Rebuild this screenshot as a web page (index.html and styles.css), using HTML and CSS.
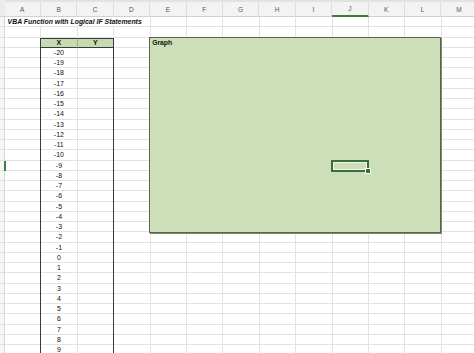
FILE: index.html
```html
<!DOCTYPE html>
<html lang="en">
<head>
  <title>VBA Function with Logical IF Statements</title>
  <meta charset="UTF-8">
  <link rel="stylesheet" href="styles.css">
</head>
<body>
  <div class="sheet">
    <!-- column headers -->
    <div class="corner"></div>
    <div class="colhead">A</div>
    <div class="colhead">B</div>
    <div class="colhead">C</div>
    <div class="colhead">D</div>
    <div class="colhead">E</div>
    <div class="colhead">F</div>
    <div class="colhead">G</div>
    <div class="colhead">H</div>
    <div class="colhead">I</div>
    <div class="colhead active">J</div>
    <div class="colhead">K</div>
    <div class="colhead">L</div>
    <div class="colhead">M</div>

    <!-- grid background -->
    <div class="rowheads"></div>
    <div class="cells"></div>

    <div class="title">VBA Function with Logical IF Statements</div>

    <div class="xy-table">
      <div class="xy-head">X</div>
      <div class="xy-head">Y</div>
      <div class="xs">
        <div>-20</div><div>-19</div><div>-18</div><div>-17</div><div>-16</div>
        <div>-15</div><div>-14</div><div>-13</div><div>-12</div><div>-11</div>
        <div>-10</div><div>-9</div><div>-8</div><div>-7</div><div>-6</div>
        <div>-5</div><div>-4</div><div>-3</div><div>-2</div><div>-1</div>
        <div>0</div><div>1</div><div>2</div><div>3</div><div>4</div>
        <div>5</div><div>6</div><div>7</div><div>8</div><div>9</div>
      </div>
    </div>

    <div class="graph">Graph</div>

    <div class="active-cell"><span class="handle"></span></div>
    <div class="row-mark"></div>
  </div>
</body>
</html>
```

FILE: styles.css
```css
body {
  margin: 0;
  background: #fff;
  font-family: 'Liberation Sans', Arial, sans-serif;
  overflow: hidden;
}
.sheet {
  display: grid;
  grid-template-columns: 4.6px repeat(13, 36.4px);
  grid-template-rows: 17px repeat(33, 10.25px);
  font-size: 7px;
  color: #111;
}
.corner {
  background: #ececec;
  border-bottom: 1px solid #d2d2d2;
}
.colhead {
  background: #f3f3f3;
  border-top: 2px solid #e2e2e2;
  border-bottom: 1px solid #d2d2d2;
  border-right: 1px solid #dedede;
  color: #555;
  font-size: 6.5px;
  display: flex;
  align-items: center;
  justify-content: center;
}
.colhead.active {
  border-bottom: 2px solid #3e7a43;
}
.rowheads {
  grid-column: 1;
  grid-row: 2 / -1;
  background: #f6f6f6 repeating-linear-gradient(to bottom, transparent 0 9.25px, #e2e2e2 9.25px 10.25px);
  border-right: 1px solid #d6d6d6;
}
.cells {
  grid-column: 2 / -1;
  grid-row: 2 / -1;
  background-image:
    repeating-linear-gradient(to right, transparent 0 35.4px, #e3e3e3 35.4px 36.4px),
    repeating-linear-gradient(to bottom, transparent 0 9.25px, #e3e3e3 9.25px 10.25px);
}
.title {
  grid-column: 2 / span 4;
  grid-row: 2;
  margin-right: 1px;
  margin-bottom: 1px;
  background: #fff;
  font-weight: bold;
  font-style: italic;
  font-size: 6.9px;
  padding-left: 3px;
  line-height: 9.25px;
  white-space: nowrap;
}
.xy-table {
  grid-column: 3 / span 2;
  grid-row: 4 / span 31;
  margin-left: -1px;
  display: grid;
  grid-template-columns: 1fr 1fr;
  grid-template-rows: 10.25px;
  align-content: start;
  border-left: 1px solid #3a3a3a;
  border-right: 1px solid #3a3a3a;
}
.xy-head {
  background: #c7dbb2;
  border-top: 1px solid #3a3a3a;
  border-bottom: 1px solid #3a3a3a;
  font-weight: bold;
  text-align: center;
  line-height: 8.25px;
}
.xy-head + .xy-head {
  border-left: 1px solid #9aae88;
}
.xs {
  grid-column: 1;
  text-align: center;
}
.xs div {
  height: 10.25px;
  line-height: 10.25px;
}
.graph {
  grid-column: 6 / span 8;
  grid-row: 4 / span 19;
  margin-left: -1px;
  margin-top: -0.5px;
  margin-bottom: -1px;
  background: #cddfb9;
  border: 1px solid #56664c;
  box-shadow: 1px 1px 0 #7a8870;
  font-weight: bold;
  font-size: 6.8px;
  padding: 1px 2px;
}
.active-cell {
  grid-column: 11;
  grid-row: 16;
  position: relative;
  margin: -1px 0 -1px -1px;
  border: 2px solid #3b6c3d;
  box-shadow: inset 0 0 0 1px #eef4e8;
}
.handle {
  position: absolute;
  right: -4px;
  bottom: -4px;
  width: 4px;
  height: 4px;
  background: #3b6c3d;
  border: 1px solid #fff;
}
.row-mark {
  grid-column: 1;
  grid-row: 16;
  justify-self: end;
  width: 2px;
  margin-right: -1px;
  background: #3e7a43;
}
```
